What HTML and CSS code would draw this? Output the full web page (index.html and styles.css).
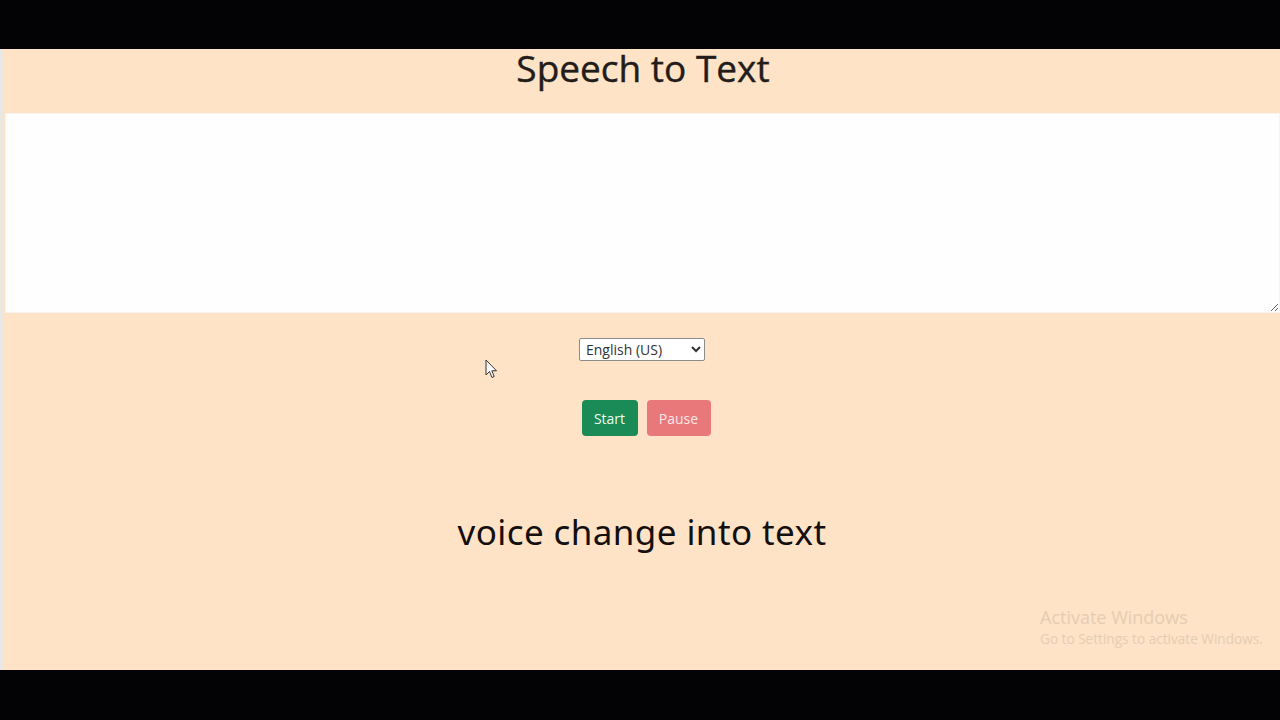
FILE: index.html
```html
<!DOCTYPE html>
<html lang="en">
<head>
<meta charset="utf-8">
<title>Speech to Text</title>
<link rel="stylesheet" href="styles.css">
</head>
<body>
<div class="bar-top"></div>
<main class="page">
  <h1 class="title">Speech to Text</h1>
  <div class="area-wrap">
    <textarea class="transcript"></textarea>
  </div>
  <div class="lang-row">
    <select class="lang">
      <option>English (US)</option>
    </select>
  </div>
  <div class="btn-row">
    <button class="btn btn-start">Start</button>
    <button class="btn btn-pause" disabled>Pause</button>
  </div>
  <p class="caption">voice change into text</p>
  <svg class="cursor" width="14" height="20" viewBox="0 0 14 20">
    <path d="M1 1 L1 16 L4.5 12.5 L7 18.5 L9.2 17.5 L6.8 11.8 L11.5 11.8 Z" fill="#fff" stroke="#333" stroke-width="1" stroke-linejoin="round"/>
  </svg>
  <div class="watermark">
    <div class="wm-title">Activate Windows</div>
    <div class="wm-sub">Go to Settings to activate Windows.</div>
  </div>
</main>
<div class="bar-bottom"></div>
</body>
</html>
```
FILE: styles.css
```css
html, body {
  margin: 0;
  padding: 0;
  background: #000;
  width: 1280px;
  height: 720px;
  overflow: hidden;
}
.bar-top { height: 49px; background: #030204; }
.bar-bottom { height: 50px; background: #030204; }
.page {
  position: relative;
  height: 621px;
  background: #fee3c6;
  border-left: 4px solid #ebe7e3;
  box-sizing: border-box;
  font-family: "Open Sans", "Noto Sans", sans-serif;
}
.title {
  margin: 0;
  height: 64px;
  text-align: center;
  font-family: "Open Sans", sans-serif;
  font-weight: 500;
  font-size: 37px;
  line-height: 38px;
  color: #221c1a;
  letter-spacing: 0;
  padding-left: 2px;
  -webkit-text-stroke: 0.4px #221c1a;
}
.area-wrap {
  padding-left: 1px;
  height: 200px;
}
.transcript {
  display: block;
  width: 100%;
  height: 200px;
  box-sizing: border-box;
  border: 1px solid #f7f3f0;
  background: #fffefe;
  margin: 0;
  resize: both;
  outline: none;
}
.lang-row {
  display: flex;
  justify-content: center;
  padding-top: 25px;
}
.lang {
  width: 126px;
  height: 23px;
  font-family: "Open Sans", sans-serif;
  font-size: 14px;
  color: #333;
  background: #fff;
  border: 1px solid #8b8b8b;
  border-radius: 2px;
  padding: 0 2px;
}
.btn-row {
  display: flex;
  justify-content: center;
  gap: 9px;
  padding-top: 39px;
  padding-left: 8px;
}
.btn {
  height: 36px;
  border: none;
  border-radius: 4px;
  color: #fff;
  font-family: "Open Sans", sans-serif;
  font-size: 14px;
  padding: 0;
}
.btn-start {
  width: 56px;
  background: #1a8a56;
  color: #eafff2;
}
.btn-pause {
  width: 64px;
  background: #e8787a;
  color: #fde7e7;
}
.caption {
  margin: 0;
  padding-top: 74px;
  text-align: center;
  font-family: "Noto Sans", sans-serif;
  font-size: 35px;
  line-height: 44px;
  color: #140f0e;
  letter-spacing: 0.4px;
}
.cursor {
  position: absolute;
  left: 481px;
  top: 310px;
}
.watermark {
  position: absolute;
  left: 1036px;
  top: 557px;
  color: #e5cdb2;
  font-family: "Open Sans", sans-serif;
}
.wm-title { font-size: 18px; line-height: 22px; }
.wm-sub { font-size: 13.6px; line-height: 22px; }
```
